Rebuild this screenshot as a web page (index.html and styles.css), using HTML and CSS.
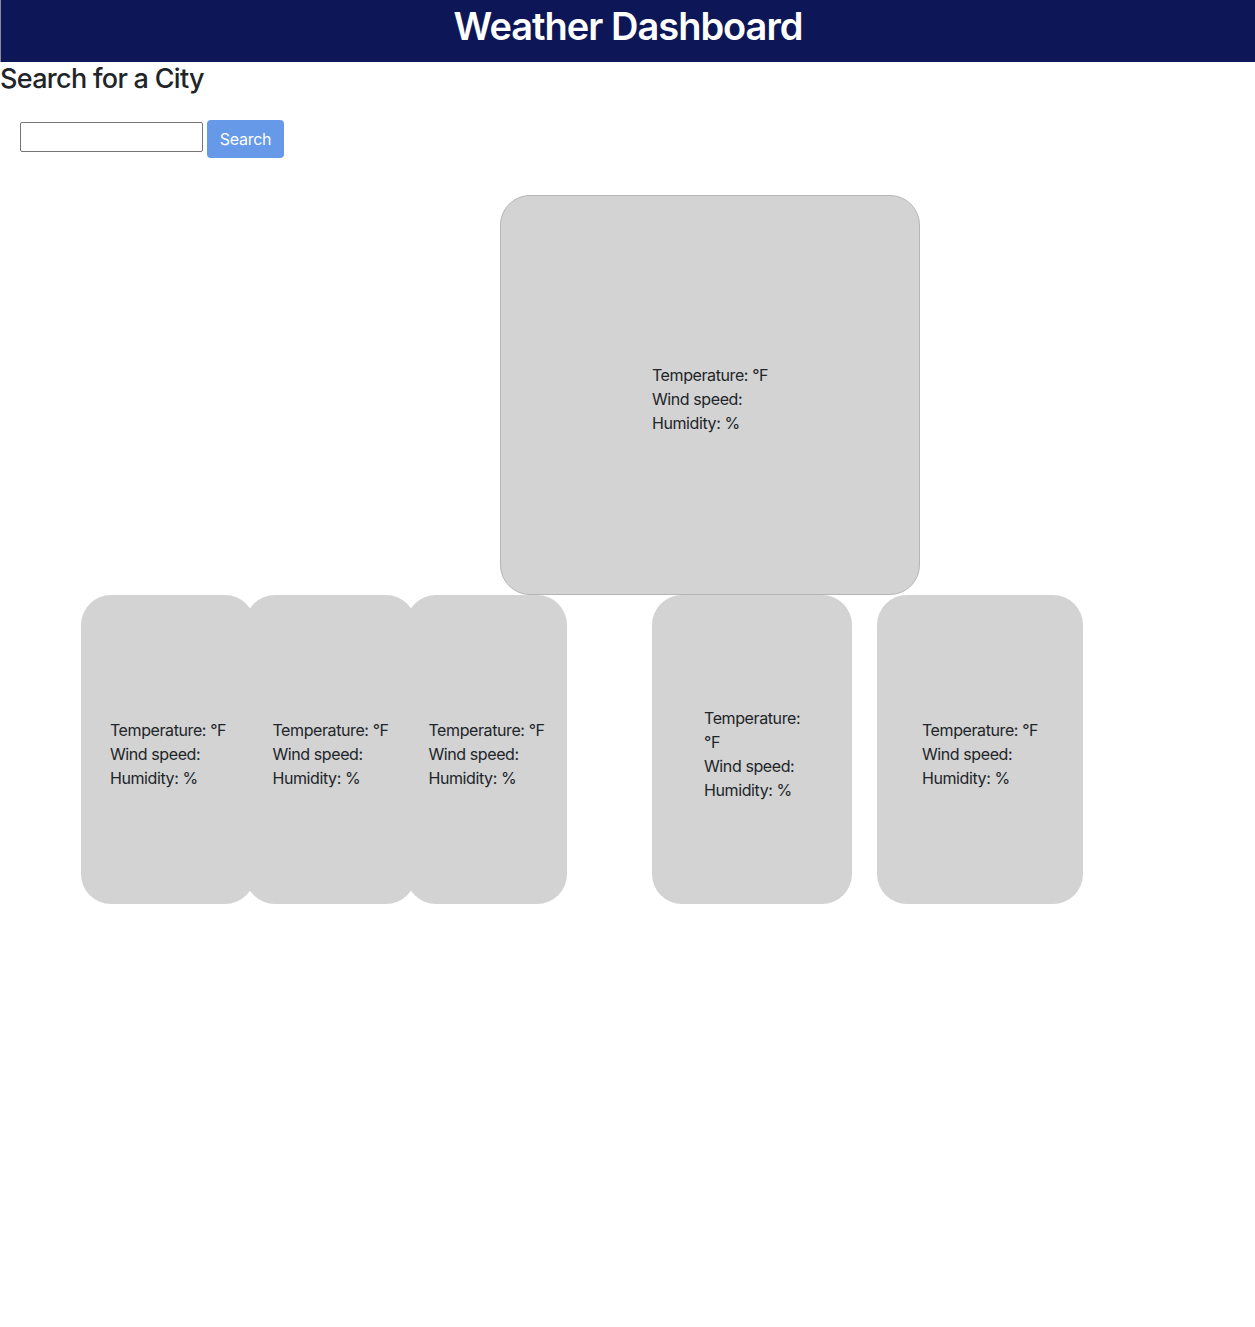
FILE: index.html
```html
<!DOCTYPE html>
<html lang="en">
<head>
<meta charset="utf-8">
<title>Weather Dashboard</title>
<link rel="stylesheet" href="styles.css">
</head>
<body>
<header class="banner">
  <h1 class="banner-title">Weather Dashboard</h1>
</header>
<section class="search">
  <h2 class="search-title">Search for a City</h2>
  <form class="search-form">
    <input class="search-input" type="text">
    <button class="search-btn" type="button">Search</button>
  </form>
</section>
<main class="weather">
  <div class="today card">
    <div class="info">
      <div>Temperature: °F</div>
      <div>Wind speed: </div>
      <div>Humidity: %</div>
    </div>
  </div>
  <div class="forecast">
    <div class="fcard f1 card">
      <div class="info">
        <div>Temperature: °F</div>
        <div>Wind speed: </div>
        <div>Humidity: %</div>
      </div>
    </div>
    <div class="fcard f2 card">
      <div class="info">
        <div>Temperature: °F</div>
        <div>Wind speed: </div>
        <div>Humidity: %</div>
      </div>
    </div>
    <div class="fcard f3 card">
      <div class="info">
        <div>Temperature: °F</div>
        <div>Wind speed: </div>
        <div>Humidity: %</div>
      </div>
    </div>
    <div class="fcard f4 card">
      <div class="info narrow">
        <div>Temperature: °F</div>
        <div>Wind speed: </div>
        <div>Humidity: %</div>
      </div>
    </div>
    <div class="fcard f5 card">
      <div class="info">
        <div>Temperature: °F</div>
        <div>Wind speed: </div>
        <div>Humidity: %</div>
      </div>
    </div>
  </div>
</main>
</body>
</html>
```

FILE: styles.css
```css
* { box-sizing: border-box; }

body {
  margin: 0;
  font-family: Inter, "Noto Sans", sans-serif;
  font-size: 16px;
  line-height: 24px;
  letter-spacing: -0.4px;
  color: #212529;
  background: #fff;
}

.banner {
  height: 62px;
  background: #0d1757;
  border-left: 1px solid #8a8a9a;
  display: flex;
  align-items: center;
  justify-content: center;
}

.banner-title {
  margin: 0;
  color: #fff;
  font-family: Inter, "Liberation Sans", sans-serif;
  font-weight: 600;
  font-size: 38px;
  line-height: 46px;
  letter-spacing: -1px;
  padding-bottom: 10px;
}

.search-title {
  margin: 0;
  font-size: 27px;
  font-weight: 500;
  line-height: 34px;
  letter-spacing: -0.7px;
}

.search-form {
  display: flex;
  align-items: flex-start;
  gap: 4px;
  padding: 24px 20px 0;
}

.search-input {
  width: 183px;
  height: 30px;
  margin-top: 2px;
  border: 1px solid #767676;
  border-radius: 2px;
  padding: 0 4px;
  font: inherit;
}

.search-btn {
  width: 77px;
  height: 38px;
  border: none;
  border-radius: 4px;
  background: #6699e8;
  color: #fff;
  font-family: inherit;
  font-size: 16px;
  letter-spacing: -0.3px;
}

.card {
  background: #d3d3d3;
  display: flex;
  align-items: center;
  justify-content: center;
}

.info {
  padding-top: 8px;
}

.today {
  margin: 37px 0 0 500px;
  width: 420px;
  height: 400px;
  border: 1px solid #b5b5b5;
  border-radius: 30px;
}

.forecast {
  display: flex;
  padding-left: 81px;
}

.fcard {
  height: 309px;
  border-radius: 30px;
}

.f1 { width: 174px; }
.f2 { width: 171px; margin-left: -10px; }
.f3 { width: 161px; margin-left: -10px; }
.f4 { width: 200px; margin-left: 85px; }
.f5 { width: 206px; margin-left: 25px; }

.narrow { width: 96px; }
```
